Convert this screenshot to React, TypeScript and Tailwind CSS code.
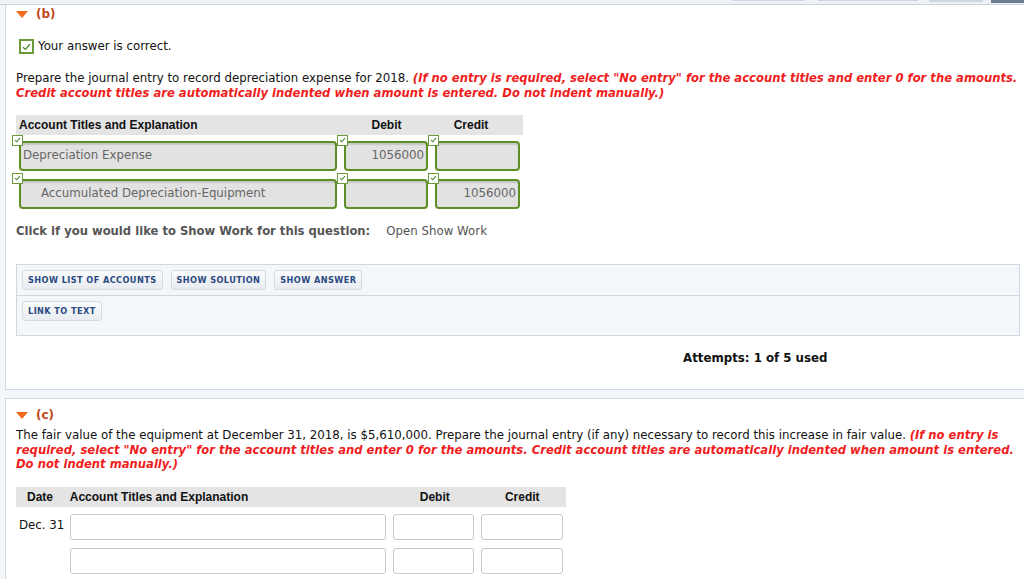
import React from "react";

const verdana = "font-['DejaVu_Sans',Verdana,sans-serif]";

function TickBox({ size = "small" }: { size?: "small" | "big" }) {
  if (size === "big") {
    return (
      <span className="inline-flex h-[15px] w-[15px] items-center justify-center border-2 border-[#6a9a3a] bg-white">
        <svg width="9" height="8" viewBox="0 0 9 8" fill="none" aria-hidden="true">
          <path d="M1 4.2L3.4 6.4L8 1.2" stroke="#4c8a2a" strokeWidth="1.3" />
        </svg>
      </span>
    );
  }
  return (
    <span className="absolute -left-[7px] -top-[6px] z-10 flex h-[11px] w-[11px] items-center justify-center border border-[#6a9a3a] bg-white">
      <svg width="7" height="6" viewBox="0 0 7 6" fill="none" aria-hidden="true">
        <path d="M1 3.2L2.7 4.8L6 1.2" stroke="#4c8a2a" strokeWidth="1.1" />
      </svg>
    </span>
  );
}

function GreenField({
  value,
  width,
  align = "left",
  indent = false,
}: {
  value: string;
  width: string;
  align?: "left" | "right";
  indent?: boolean;
}) {
  return (
    <div className={`relative ${width}`}>
      <TickBox />
      <div
        className={`flex h-[30px] items-center rounded-[4px] border-2 border-[#5f8f24] bg-[#e2e2e2] shadow-[inset_0_2px_1px_rgba(0,0,0,0.12)] text-[11.8px] text-[#666] ${
          align === "right" ? "justify-end pr-[2px]" : indent ? "pl-[20px]" : "pl-[2px]"
        }`}
      >
        {value}
      </div>
    </div>
  );
}

function Btn({ label }: { label: string }) {
  return (
    <button className="h-[20px] rounded-[3px] border border-[#d3dae3] bg-gradient-to-b from-[#fafbfc] to-[#e8ecf1] px-[5px] text-[8.2px] font-bold tracking-[0.05em] text-[#2b4a80]">
      {label}
    </button>
  );
}

function Caret({ label }: { label: string }) {
  return (
    <div className="flex items-center gap-[8px]">
      <svg width="12" height="7" viewBox="0 0 12 7" aria-hidden="true">
        <path d="M0 0H12L6 7Z" fill="#f26b1d" />
      </svg>
      <span className="text-[12px] font-bold text-[#c2461a]">{label}</span>
    </div>
  );
}

export default function App() {
  return (
    <div className={`min-h-screen bg-[#f4f7fa] ${verdana} text-[#111]`}>
      {/* top strip */}
      <div className="relative h-[5px] border-b border-[#c8d1dc] bg-[#eef2f6]">
        <div className="absolute left-[733px] top-0 h-[1px] w-[72px] bg-[#d0d6de]" />
        <div className="absolute left-[818px] top-0 h-[1px] w-[100px] bg-[#d0d6de]" />
        <div className="absolute left-[929px] top-0 h-[2px] w-[54px] bg-[#d0d6de]" />
        <div className="absolute left-[991px] top-0 h-[3px] w-[40px] bg-[#6c7c90]" />
      </div>

      {/* part b */}
      <div className="ml-[5px] border-b border-l border-[#ccd5e1] bg-white pb-[21px] pl-[10px]">
        <Caret label="(b)" />

        <div className="mt-[15px] flex items-center gap-[4px] pl-[3px] text-[11.8px]">
          <TickBox size="big" />
          <span>Your answer is correct.</span>
        </div>

        <p className="mt-[15px] text-[11.8px] leading-[15px]">
          Prepare the journal entry to record depreciation expense for 2018.{" "}
          <span className="text-[11.6px] font-bold italic text-[#f01d1d]">
            (If no entry is required, select "No entry" for the account titles and enter 0 for the amounts.
            Credit account titles are automatically indented when amount is entered. Do not indent manually.)
          </span>
        </p>

        <div className="mt-[14px] w-[507px]">
          <div className="flex h-[20px] items-center bg-[#e4e4e4] font-['Liberation_Sans',Arial,sans-serif] text-[12px] font-bold">
            <span className="w-[330px] pl-[3px]">Account Titles and Explanation</span>
            <span className="w-[81px] text-center">Debit</span>
            <span className="w-[88px] text-center">Credit</span>
          </div>
          <div className="mt-[6px] flex flex-col gap-[8px] pl-[3px]">
            <div className="flex gap-[7px]">
              <GreenField value="Depreciation Expense" width="w-[318px]" />
              <GreenField value="1056000" width="w-[84px]" align="right" />
              <GreenField value="" width="w-[85px]" />
            </div>
            <div className="flex gap-[7px]">
              <GreenField value="Accumulated Depreciation-Equipment" width="w-[318px]" indent />
              <GreenField value="" width="w-[84px]" />
              <GreenField value="1056000" width="w-[85px]" align="right" />
            </div>
          </div>
        </div>

        <div className="mt-[14px] flex text-[11.6px] text-[#555]">
          <span className="font-bold">Click if you would like to Show Work for this question:</span>
          <span className="ml-[16px] text-[11.8px]">Open Show Work</span>
        </div>

        <div className="mr-[4px] mt-[24px] border border-[#cfd7e3] bg-[#f4f7fa]">
          <div className="flex gap-[8px] px-[5px] py-[5px]">
            <Btn label="SHOW LIST OF ACCOUNTS" />
            <Btn label="SHOW SOLUTION" />
            <Btn label="SHOW ANSWER" />
          </div>
          <div className="flex border-t border-[#cfd7e3] px-[5px] pb-[14px] pt-[5px]">
            <Btn label="LINK TO TEXT" />
          </div>
        </div>

        <div className="mt-[14px] pl-[667px] text-[11.8px] font-bold">Attempts: 1 of 5 used</div>
      </div>

      {/* part c */}
      <div className="ml-[5px] mt-[8px] border-l border-t border-[#ccd5e1] bg-white pb-[10px] pl-[10px]">
        <div className="pt-[7px]">
          <Caret label="(c)" />
        </div>
        <p className="mt-[4px] pr-[6px] text-[11.8px] leading-[14.5px]">
          The fair value of the equipment at December 31, 2018, is $5,610,000. Prepare the journal entry (if any)
          necessary to record this increase in fair value.{" "}
          <span className="text-[11.6px] font-bold italic text-[#f01d1d]">
            (If no entry is required, select "No entry" for the account titles and enter 0 for the amounts. Credit
            account titles are automatically indented when amount is entered. Do not indent manually.)
          </span>
        </p>

        <div className="mt-[15px] w-[550px]">
          <div className="flex h-[20px] items-center bg-[#e4e4e4] font-['Liberation_Sans',Arial,sans-serif] text-[12px] font-bold">
            <span className="w-[54px] pl-[11px]">Date</span>
            <span className="w-[323px]">Account Titles and Explanation</span>
            <span className="w-[88px] text-center">Debit</span>
            <span className="w-[88px] text-center">Credit</span>
          </div>
          <div className="mt-[7px] flex flex-col gap-[8px]">
            {["Dec. 31", ""].map((d, i) => (
              <div key={i} className="flex items-start">
                <span className="w-[54px] pl-[3px] pt-[3px] text-[11.8px]">{d}</span>
                <input className="h-[26px] w-[316px] rounded-[3px] border border-[#c9c9c9] bg-white" />
                <input className="ml-[7px] h-[26px] w-[81px] rounded-[3px] border border-[#c9c9c9] bg-white" />
                <input className="ml-[7px] h-[26px] w-[82px] rounded-[3px] border border-[#c9c9c9] bg-white" />
              </div>
            ))}
          </div>
        </div>
      </div>
    </div>
  );
}
